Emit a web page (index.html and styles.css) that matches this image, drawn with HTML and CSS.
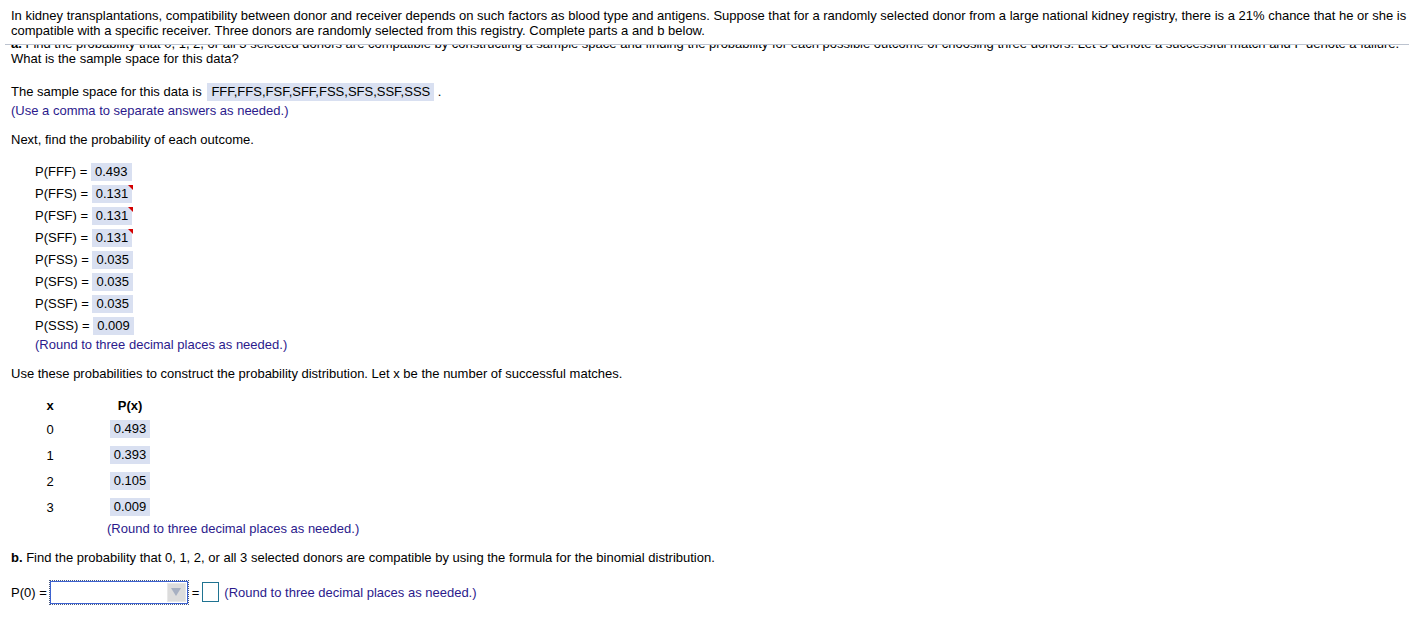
FILE: index.html
```html
<!DOCTYPE html>
<html>
<head>
<meta charset="utf-8">
<link rel="stylesheet" href="styles.css">
</head>
<body>
<div class="page">
  <div class="header">
    In kidney transplantations, compatibility between donor and receiver depends on such factors as blood type and antigens. Suppose that for a randomly selected donor from a large national kidney registry, there is a 21% chance that he or she is compatible with a specific receiver. Three donors are randomly selected from this registry. Complete parts a and b below.
  </div>
  <div class="scroll">
    <div class="content">
      <div class="line part-a"><b>a.</b> Find the probability that 0, 1, 2, or all 3 selected donors are compatible by constructing a sample space and finding the probability for each possible outcome of choosing three donors. Let S denote a successful match and F denote a failure.</div>
      <div class="line">What is the sample space for this data?</div>

      <div class="sample">The sample space for this data is <span class="ans ans-wide">FFF,FFS,FSF,SFF,FSS,SFS,SSF,SSS</span> .</div>
      <div class="line note">(Use a comma to separate answers as needed.)</div>

      <div class="line gap">Next, find the probability of each outcome.</div>

      <div class="plist">
        <div class="prow">P(FFF) = <span class="ans">0.493</span></div>
        <div class="prow">P(FFS) = <span class="ans flag">0.131</span></div>
        <div class="prow">P(FSF) = <span class="ans flag">0.131</span></div>
        <div class="prow">P(SFF) = <span class="ans flag">0.131</span></div>
        <div class="prow">P(FSS) = <span class="ans">0.035</span></div>
        <div class="prow">P(SFS) = <span class="ans">0.035</span></div>
        <div class="prow">P(SSF) = <span class="ans">0.035</span></div>
        <div class="prow">P(SSS) = <span class="ans">0.009</span></div>
        <div class="line note">(Round to three decimal places as needed.)</div>
      </div>

      <div class="line gap">Use these probabilities to construct the probability distribution. Let x be the number of successful matches.</div>

      <div class="dist">
        <div class="drow dhead"><span class="cx">x</span><span class="cp">P(x)</span></div>
        <div class="drow"><span class="cx">0</span><span class="cp"><span class="ans">0.493</span></span></div>
        <div class="drow"><span class="cx">1</span><span class="cp"><span class="ans">0.393</span></span></div>
        <div class="drow"><span class="cx">2</span><span class="cp"><span class="ans">0.105</span></span></div>
        <div class="drow"><span class="cx">3</span><span class="cp"><span class="ans">0.009</span></span></div>
        <div class="line note dnote">(Round to three decimal places as needed.)</div>
      </div>

      <div class="line gap"><b>b.</b> Find the probability that 0, 1, 2, or all 3 selected donors are compatible by using the formula for the binomial distribution.</div>

      <div class="brow">
        <span>P(0) =</span>
        <span class="select"><span class="arrow"><svg width="12" height="10" viewBox="0 0 12 10"><path d="M1 1 L11 1 L6 9 Z" fill="#a7b0c2"/></svg></span></span>
        <span class="eq">=</span>
        <span class="box"></span>
        <span class="note">(Round to three decimal places as needed.)</span>
      </div>
    </div>
  </div>
</div>
</body>
</html>
```

FILE: styles.css
```css
html, body {
  margin: 0;
  padding: 0;
  background: #fff;
}
body {
  font-family: "Liberation Sans", Arial, sans-serif;
  font-size: 13px;
  line-height: 15px;
  color: #000;
}
.page {
  width: 1409px;
  height: 622px;
  overflow: hidden;
}
.header {
  margin-left: 5px;
  padding: 8px 0 6px 6px;
  border-bottom: 1px solid #bcc3cf;
  height: 30px;
}
.scroll {
  height: 576px;
  overflow: hidden;
}
.content {
  margin-top: -9px;
  padding-left: 11px;
}
.line {
  line-height: 16px;
  white-space: nowrap;
}
.part-a {
  line-height: 15px;
}
.note {
  color: #2b1a8c;
}
.gap {
  margin-top: 13px;
}
.sample {
  margin-top: 15px;
  height: 20px;
  line-height: 20px;
}
.sample + .line {
  margin-top: 1px;
}
.ans {
  display: inline-block;
  background: #d9e0f1;
  padding: 0 4px;
  line-height: 18px;
  height: 18px;
  position: relative;
}
.ans-wide {
  padding: 0 4px;
  margin-left: 2px;
}
.flag::after {
  content: "";
  position: absolute;
  top: 0;
  right: -1px;
  border-top: 5px solid #d40000;
  border-left: 5px solid transparent;
}
.plist {
  margin-top: 13px;
  padding-left: 24px;
}
.prow {
  height: 22px;
  line-height: 22px;
}
.dist {
  margin-top: 12px;
  padding-left: 24px;
}
.drow {
  display: flex;
  align-items: center;
  height: 26px;
}
.dhead {
  height: 22px;
  font-weight: bold;
}
.cx {
  width: 30px;
  text-align: center;
}
.cp {
  width: 60px;
  margin-left: 35px;
  text-align: center;
}
.dnote {
  margin-left: 72px;
  margin-top: 1px;
}
.brow {
  margin-top: 14px;
  height: 24px;
  display: flex;
  align-items: center;
}
.select {
  margin-left: 3px;
  width: 136px;
  height: 21px;
  border: 1px solid #3d62d0;
  outline: 1px dotted #4a5a80;
  display: flex;
  justify-content: flex-end;
  align-items: center;
  box-sizing: content-box;
}
.arrow {
  width: 17px;
  height: 17px;
  background: #dcdcdc;
  border: 1px solid #e8e8e8;
  margin-right: 1px;
  display: flex;
  align-items: center;
  justify-content: center;
}
.eq {
  margin-left: 4px;
}
.box {
  margin-left: 3px;
  width: 15px;
  height: 18px;
  border: 1px solid #1f7391;
}
.brow .note {
  margin-left: 5px;
}
```
